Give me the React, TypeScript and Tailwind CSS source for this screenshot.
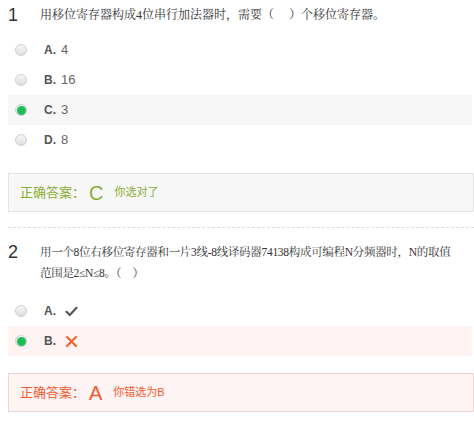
import type { ReactNode } from "react";

const serif = { fontFamily: '"Liberation Serif", "Noto Serif CJK SC", "Noto Sans CJK SC", serif' };

function Radio({ checked }: { checked?: boolean }) {
  return (
    <span className="flex h-[12px] w-[12px] shrink-0 items-center justify-center rounded-full border border-[#cfcfcf] bg-gradient-to-b from-[#f6f6f6] to-[#dedede]">
      {checked && <span className="h-[9px] w-[9px] rounded-full bg-[#1fbd57]" />}
    </span>
  );
}

function Check() {
  return (
    <svg width="13" height="11" viewBox="0 0 13 11" className="ml-[4px]">
      <path d="M1.5 5.8 L4.8 9 L11.5 1.8" fill="none" stroke="#555" strokeWidth="2.2" strokeLinecap="round" strokeLinejoin="round" />
    </svg>
  );
}

function Cross() {
  return (
    <svg width="13" height="13" viewBox="0 0 13 13" className="ml-[4px]">
      <path d="M2 2 L11 11 M11 2 L2 11" stroke="#f26531" strokeWidth="2.2" strokeLinecap="round" />
    </svg>
  );
}

function Option({ letter, children, checked, tint }: { letter: string; children: ReactNode; checked?: boolean; tint?: string }) {
  return (
    <div className={`flex h-[30px] items-center pl-[7px] mr-[2px] ${tint ?? ""}`}>
      <Radio checked={checked} />
      <span className="ml-[17px] text-[12px] font-bold text-[#555]">{letter}.</span>
      <span className="ml-[5px] flex items-center text-[13px] text-[#666]">{children}</span>
    </div>
  );
}

export default function App() {
  return (
    <div className="h-[423px] w-[474px] overflow-hidden bg-white pl-[8px]" style={{ fontFamily: '"Liberation Sans", "Noto Sans CJK SC", sans-serif' }}>
      {/* question 1 */}
      <div className="flex pt-[5px]">
        <span className="w-[32px] shrink-0 text-[18px] leading-[21px] text-[#333]">1</span>
        <p className="text-[12px] leading-[21px] text-[#333]" style={serif}>
          用移位寄存器构成4位串行加法器时，需要（　 ）个移位寄存器。
        </p>
      </div>
      <div className="mt-[9px]">
        <Option letter="A">4</Option>
        <Option letter="B">16</Option>
        <Option letter="C" checked tint="bg-[#f7f7f7]">3</Option>
        <Option letter="D">8</Option>
      </div>
      <div className="mt-[18px] flex h-[39px] items-center border border-[#e3e3e3] bg-[#f7f7f7] pl-[11px] text-[#8aad35]">
        <span className="text-[13px]">正确答案：</span>
        <span className="ml-[4px] text-[20px] leading-none">C</span>
        <span className="ml-[11px] text-[11px]">你选对了</span>
      </div>
      <div className="mt-[15px] border-t border-dashed border-[#dcdcdc]" />

      {/* question 2 */}
      <div className="mt-[14px] flex">
        <span className="w-[32px] shrink-0 text-[18px] leading-[21px] text-[#333]">2</span>
        <p className="whitespace-nowrap text-[11.5px] leading-[21px] tracking-[-0.3px] text-[#333]" style={serif}>
          用一个8位右移位寄存器和一片3线-8线译码器74138构成可编程N分频器时，N的取值
          <br />
          范围是2≤N≤8。（　）
        </p>
      </div>
      <div className="mt-[12px]">
        <Option letter="A"><Check /></Option>
        <Option letter="B" checked tint="bg-[#fff3f3]"><Cross /></Option>
      </div>
      <div className="mt-[17px] flex h-[39px] items-center border border-[#f2d2d2] bg-[#fff4f4] pl-[11px] text-[#f25a30]">
        <span className="text-[13px]">正确答案：</span>
        <span className="ml-[4px] text-[20px] leading-none">A</span>
        <span className="ml-[11px] text-[11px]">你错选为B</span>
      </div>
    </div>
  );
}
